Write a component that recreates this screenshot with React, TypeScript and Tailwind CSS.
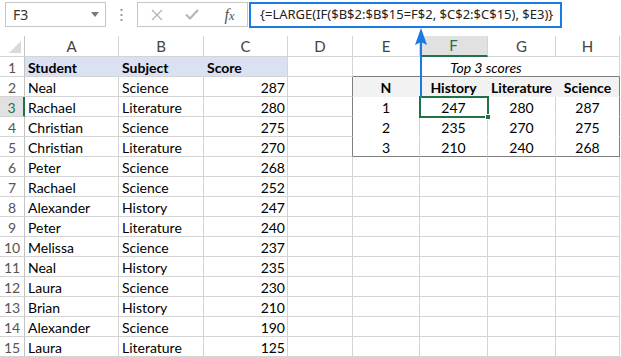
import React from "react";

const students: [string, string, number][] = [
  ["Neal", "Science", 287],
  ["Rachael", "Literature", 280],
  ["Christian", "Science", 275],
  ["Christian", "Literature", 270],
  ["Peter", "Science", 268],
  ["Rachael", "Science", 252],
  ["Alexander", "History", 247],
  ["Peter", "Literature", 240],
  ["Melissa", "Science", 237],
  ["Neal", "History", 235],
  ["Laura", "Science", 230],
  ["Brian", "History", 210],
  ["Alexander", "Science", 190],
  ["Laura", "Literature", 125],
];

const top3 = [
  [1, 247, 280, 287],
  [2, 235, 270, 275],
  [3, 210, 240, 268],
];

const gridCols = "grid grid-cols-[25px_94px_85px_84px_65px_67px_68px_68px_64px]";
const base = "h-[20px] border-r border-b flex items-center pt-px whitespace-nowrap overflow-hidden";

function RowHeader({ n, active }: { n: number; active?: boolean }) {
  return active ? (
    <div className={`${base} justify-center bg-[#e1e1e1] text-[#217346] border-b-[#d4d4d4] border-r-2 border-r-[#217346]`}>{n}</div>
  ) : (
    <div className={`${base} justify-center text-[#555] border-b-[#d4d4d4] border-r-[#c4c4c4]`}>{n}</div>
  );
}

function ColHeaders() {
  const letters = ["A", "B", "C", "D", "E", "F", "G", "H"];
  return (
    <div className={`${gridCols} text-[15px]`}>
      <div className="h-[21px] border-r border-b border-r-[#c4c4c4] border-b-[#d4d4d4] relative">
        <svg className="absolute right-[3px] bottom-[3px]" width="12" height="12" viewBox="0 0 12 12">
          <polygon points="12,0 12,12 0,12" fill="#dadada" />
        </svg>
      </div>
      {letters.map((l) =>
        l === "F" ? (
          <div key={l} className="h-[21px] flex items-center justify-center bg-[#e1e1e1] text-[#217346] border-r border-r-[#d4d4d4] border-b-2 border-b-[#217346]">
            {l}
          </div>
        ) : (
          <div key={l} className="h-[21px] flex items-center justify-center text-[#444] border-r border-b border-r-[#d4d4d4] border-b-[#d4d4d4]">
            {l}
          </div>
        )
      )}
    </div>
  );
}

function TableCells({ row }: { row: number }) {
  if (row === 1) {
    return (
      <div className={`${base} col-span-4 justify-center italic border-r-[#d4d4d4] border-b-[#7f7f7f]`}>Top 3 scores</div>
    );
  }
  if (row === 2) {
    return (
      <>
        <div className={`${base} justify-center font-bold bg-[#f2f2f2] border-r-[#f2f2f2] border-b-[#f2f2f2]`}>N</div>
        <div className={`${base} justify-center font-bold bg-[#f2f2f2] border-r-[#f2f2f2] border-b-[#f2f2f2]`}>History</div>
        <div className={`${base} justify-center font-bold bg-[#f2f2f2] border-r-[#f2f2f2] border-b-[#f2f2f2]`}>Literature</div>
        <div className={`${base} justify-center font-bold bg-[#f2f2f2] border-r-[#7f7f7f] border-b-[#f2f2f2]`}>Science</div>
      </>
    );
  }
  if (row >= 3 && row <= 5) {
    const vals = top3[row - 3];
    const bottom = row === 5 ? "border-b-[#7f7f7f]" : "border-b-white";
    return (
      <>
        <div className={`${base} justify-center border-r-[#d4d4d4] ${bottom}`}>{vals[0]}</div>
        <div className={`${base} justify-center border-r-[#d4d4d4] relative overflow-visible ${bottom}`}>
          {vals[1]}
          {row === 3 && (
            <div className="absolute -left-px -top-px w-[70px] h-[22px] border-2 border-[#217346] z-10">
              <div className="absolute -right-[4px] -bottom-[4px] w-[6px] h-[6px] bg-[#217346] border border-white" />
            </div>
          )}
        </div>
        <div className={`${base} justify-center border-r-[#d4d4d4] ${bottom}`}>{vals[2]}</div>
        <div className={`${base} justify-center border-r-[#7f7f7f] ${bottom}`}>{vals[3]}</div>
      </>
    );
  }
  return (
    <>
      <div className={`${base} border-[#d4d4d4]`} />
      <div className={`${base} border-[#d4d4d4]`} />
      <div className={`${base} border-[#d4d4d4]`} />
      <div className={`${base} border-[#d4d4d4]`} />
    </>
  );
}

function Row({ row }: { row: number }) {
  const dBorder = row >= 2 && row <= 5 ? "border-r-[#7f7f7f] border-b-[#d4d4d4]" : "border-[#d4d4d4]";
  if (row === 1) {
    return (
      <div className={gridCols}>
        <RowHeader n={1} />
        <div className={`${base} pl-[3px] font-bold bg-[#d9e1f2] border-r-[#d9e1f2] border-b-[#d4d4d4]`}>Student</div>
        <div className={`${base} pl-[3px] font-bold bg-[#d9e1f2] border-r-[#d9e1f2] border-b-[#d4d4d4]`}>Subject</div>
        <div className={`${base} pl-[3px] font-bold bg-[#d9e1f2] border-[#d4d4d4]`}>Score</div>
        <div className={`${base} border-[#d4d4d4]`} />
        <TableCells row={1} />
      </div>
    );
  }
  const [name, subject, score] = students[row - 2];
  return (
    <div className={gridCols}>
      <RowHeader n={row} active={row === 3} />
      <div className={`${base} pl-[3px] border-[#d4d4d4]`}>{name}</div>
      <div className={`${base} pl-[3px] border-[#d4d4d4]`}>{subject}</div>
      <div className={`${base} justify-end pr-[2px] border-[#d4d4d4]`}>{score}</div>
      <div className={`${base} ${dBorder}`} />
      <TableCells row={row} />
    </div>
  );
}

function FormulaBar() {
  return (
    <div className="h-[36px] flex items-start pt-[2px] font-['Noto_Sans',sans-serif] text-[14px]">
      <div className="ml-[5px] w-[101px] h-[25px] border border-[#c6c6c6] flex items-center justify-between pl-[7px] pr-[6px] text-[#333]">
        <span>F3</span>
        <svg width="8" height="5" viewBox="0 0 8 5">
          <polygon points="0,0 8,0 4,5" fill="#7a7a7a" />
        </svg>
      </div>
      <div className="w-[31px] h-[25px] flex items-center justify-center">
        <svg width="3" height="12" viewBox="0 0 3 12">
          <rect x="0.5" y="0" width="2" height="2" fill="#9a9a9a" />
          <rect x="0.5" y="5" width="2" height="2" fill="#9a9a9a" />
          <rect x="0.5" y="10" width="2" height="2" fill="#9a9a9a" />
        </svg>
      </div>
      <div className="w-[111px] h-[25px] border border-[#c6c6c6] flex items-center">
        <div className="w-[38px] flex justify-center">
          <svg width="12" height="12" viewBox="0 0 12 12">
            <path d="M1 1 L11 11 M11 1 L1 11" stroke="#b4b4b4" strokeWidth="1.4" />
          </svg>
        </div>
        <div className="w-[32px] flex justify-center">
          <svg width="14" height="11" viewBox="0 0 14 11">
            <path d="M1 5.5 L5 9.5 L13 1" stroke="#b4b4b4" strokeWidth="2" fill="none" />
          </svg>
        </div>
        <div className="flex-1 flex justify-center pl-[4px]">
          <span className="font-['Liberation_Serif',serif] italic text-[#555] text-[16px] leading-none">
            f<span className="text-[13px]">x</span>
          </span>
        </div>
      </div>
      <div className="ml-[1px] w-[313px] h-[26px] border-2 border-[#1a7ae6] flex items-center pl-[9px] text-[#222] text-[13px] whitespace-nowrap">
        {"{=LARGE(IF($B$2:$B$15=F$2, $C$2:$C$15), $E3)}"}
      </div>
    </div>
  );
}

export default function App() {
  const rows = Array.from({ length: 15 }, (_, i) => i + 1);
  return (
    <div className="relative w-[621px] h-[358px] overflow-hidden bg-white font-['Lato',sans-serif] text-[14px] text-black">
      <FormulaBar />
      <ColHeaders />
      {rows.map((r) => (
        <Row key={r} row={r} />
      ))}
      <div className="h-[20px] border-t border-[#d4d4d4]" />
      <svg className="absolute left-[409px] top-[27px] z-20" width="24" height="71" viewBox="0 0 24 71">
        <line x1="12" y1="8" x2="12" y2="71" stroke="#1a7ae6" strokeWidth="2" />
        <polygon points="12,1 6,18 12,15 18,18" fill="#1a7ae6" />
      </svg>
    </div>
  );
}
